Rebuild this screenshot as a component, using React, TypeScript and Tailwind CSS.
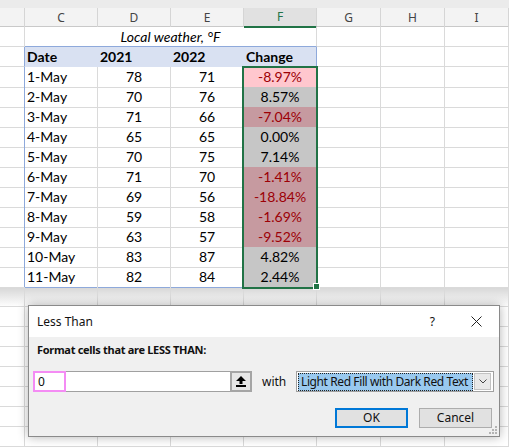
import React from 'react';

const COLS = 'grid grid-cols-[25px_73px_73px_73px_73px_64px_64px_64px]';
const GRID = 'border-[#dadada]';

const data: [string, number, number, string][] = [
  ['1-May', 78, 71, '-8.97%'],
  ['2-May', 70, 76, '8.57%'],
  ['3-May', 71, 66, '-7.04%'],
  ['4-May', 65, 65, '0.00%'],
  ['5-May', 70, 75, '7.14%'],
  ['6-May', 71, 70, '-1.41%'],
  ['7-May', 69, 56, '-18.84%'],
  ['8-May', 59, 58, '-1.69%'],
  ['9-May', 63, 57, '-9.52%'],
  ['10-May', 83, 87, '4.82%'],
  ['11-May', 82, 84, '2.44%'],
];

function EmptyCells({ n }: { n: number }) {
  return (
    <>
      {Array.from({ length: n }).map((_, i) => (
        <div key={i} className={`border-r border-b ${GRID}`} />
      ))}
    </>
  );
}

function UploadArrow() {
  return (
    <svg width="10" height="11" viewBox="0 0 10 11">
      <path d="M5 0 L10 5 L6.5 5 L6.5 8 L3.5 8 L3.5 5 L0 5 Z" fill="#000" />
      <rect x="0" y="9" width="10" height="2" fill="#000" />
    </svg>
  );
}

function Grip() {
  return (
    <svg width="8" height="8" viewBox="0 0 8 8">
      <rect x="6" y="0" width="2" height="2" fill="#b4b4b4" />
      <rect x="3" y="3" width="2" height="2" fill="#b4b4b4" />
      <rect x="6" y="3" width="2" height="2" fill="#b4b4b4" />
      <rect x="0" y="6" width="2" height="2" fill="#b4b4b4" />
      <rect x="3" y="6" width="2" height="2" fill="#b4b4b4" />
      <rect x="6" y="6" width="2" height="2" fill="#b4b4b4" />
    </svg>
  );
}

export default function App() {
  return (
    <div className="relative w-[509px] h-[448px] overflow-hidden bg-white font-['Lato',sans-serif] text-[14px] text-black">
      {/* sheet */}
      <div className="h-2 bg-[#ebebeb]" />
      <div className={`${COLS} h-[19px] bg-[#f3f3f3] border-b border-[#c9c9c9] font-['Noto_Sans',sans-serif] text-[12px] text-[#444]`}>
        <div className="border-r border-[#d5d5d5]" />
        {['C', 'D', 'E'].map((c) => (
          <div key={c} className="border-r border-[#d5d5d5] flex items-center justify-center">{c}</div>
        ))}
        <div className="border-r border-[#d5d5d5] bg-[#e1e1e1] border-b-2 border-b-[#217346] -mb-px flex items-center justify-center text-[#217346]">F</div>
        {['G', 'H', 'I'].map((c) => (
          <div key={c} className="border-r border-[#d5d5d5] flex items-center justify-center">{c}</div>
        ))}
      </div>

      {/* title row */}
      <div className={`${COLS} h-5`}>
        <div className={`border-r border-b ${GRID}`} />
        <div className={`col-span-4 border-r ${GRID} border-b border-b-[#8ea9db] flex items-end justify-center italic leading-[19px]`}>
          Local weather, °F
        </div>
        <EmptyCells n={3} />
      </div>

      {/* header row */}
      <div className={`${COLS} h-5`}>
        <div className="border-r border-[#8ea9db] border-b border-b-[#dadada]" />
        <div className="col-span-4 grid grid-cols-[73px_73px_73px_73px] bg-[#d9e1f2] border-r border-[#8ea9db] font-bold leading-5">
          <div className="pl-[2px]">Date</div>
          <div className="pl-[2px]">2021</div>
          <div className="pl-[2px]">2022</div>
          <div className="pl-[2px]">Change</div>
        </div>
        <EmptyCells n={3} />
      </div>

      {/* data rows */}
      {data.map(([date, a, b, ch], i) => {
        const last = i === data.length - 1;
        const neg = ch.startsWith('-');
        const bottom = last ? 'border-b-[#8ea9db]' : 'border-b-[#dadada]';
        const fill = i === 0 ? 'bg-[#ffc7ce]' : neg ? 'bg-[#c69aa0]' : 'bg-[#c6c6c6]';
        return (
          <div key={date} className={`${COLS} h-5 leading-5`}>
            <div className="border-r border-[#8ea9db] border-b border-b-[#dadada]" />
            <div className={`border-r border-[#dadada] border-b ${bottom} pl-[2px]`}>{date}</div>
            <div className={`border-r border-[#dadada] border-b ${bottom} text-center`}>{a}</div>
            <div className={`border-r border-[#dadada] border-b ${bottom} text-center`}>{b}</div>
            <div className={`border-r border-[#8ea9db] border-b ${bottom} ${fill} text-center ${neg ? 'text-[#9c0006]' : ''}`}>{ch}</div>
            <EmptyCells n={3} />
          </div>
        );
      })}

      {/* rows under the table */}
      {Array.from({ length: 8 }).map((_, r) => (
        <div key={r} className={`${COLS} h-5 ${r === 0 ? 'bg-gradient-to-b from-[#d6d6d6] to-white' : ''}`}>
          <EmptyCells n={8} />
        </div>
      ))}

      {/* selection */}
      <div className="absolute left-[242px] top-[66px] w-[76px] h-[223px] border-2 border-[#217346]" />
      <div className="absolute left-[313px] top-[283px] w-[7px] h-[7px] bg-[#217346] border border-white" />

      {/* dialog */}
      <div className="absolute left-[28px] top-[305px] w-[472px] h-[132px] border border-[#8a8a8a] bg-[#f0f0f0] shadow-[0_0_10px_rgba(0,0,0,0.3)] flex flex-col font-['Noto_Sans',sans-serif] text-[12px] text-[#111]">
        <div className="h-[31px] bg-white flex items-center pl-2 pr-[17px]">
          <span className="flex-1">Less Than</span>
          <span className="mr-9">?</span>
          <svg width="11" height="11" viewBox="0 0 11 11">
            <path d="M0.5 0.5 L10.5 10.5 M10.5 0.5 L0.5 10.5" stroke="#222" strokeWidth="1" />
          </svg>
        </div>
        <div className="flex-1 relative flex flex-col px-[5px]">
          <div className="pl-[3px] pt-[5px] font-bold text-[11px] tracking-[-0.3px] leading-4">Format cells that are LESS THAN:</div>
          <div className="flex items-center mt-[13px] h-[21px]">
            <div className="w-[196px] h-full bg-white border-y border-[#a0a0a0] relative">
              <div className="absolute -left-px -top-px w-[33px] h-[21px] border-2 border-[#f48cf4] flex items-center pl-[3px] leading-4">0</div>
            </div>
            <div className="w-[22px] h-full border-2 border-[#a5a5a5] bg-[#e6e6e6] flex items-center justify-center">
              <UploadArrow />
            </div>
            <span className="ml-[10px] w-[33px]">with</span>
            <div className="ml-auto w-[198px] h-full border border-[#a0a0a0] bg-white flex items-center pl-[1px] pr-[2px]">
              <div className="flex-1 h-[18px] bg-[#99c9ef] border border-dotted border-[#222] flex items-center pl-[2px] whitespace-nowrap tracking-[-0.4px]">
                Light Red Fill with Dark Red Text
              </div>
              <div className="ml-[1px] w-[17px] h-[17px] border border-[#c2c2c2] bg-[#e8e8e8] flex items-center justify-center">
                <svg width="8" height="5" viewBox="0 0 8 5">
                  <path d="M0.5 0.5 L4 4 L7.5 0.5" stroke="#444" strokeWidth="1" fill="none" />
                </svg>
              </div>
            </div>
          </div>
          <div className="flex justify-end gap-[11px] mt-4 pr-[2px]">
            <button className="w-[73px] h-5 border-2 border-[#0078d7] bg-[#e1e1e1] flex items-center justify-center">OK</button>
            <button className="w-[73px] h-5 border border-[#adadad] bg-[#e1e1e1] flex items-center justify-center">Cancel</button>
          </div>
          <div className="absolute right-[2px] bottom-[2px] flex">
            <Grip />
          </div>
        </div>
      </div>
    </div>
  );
}
